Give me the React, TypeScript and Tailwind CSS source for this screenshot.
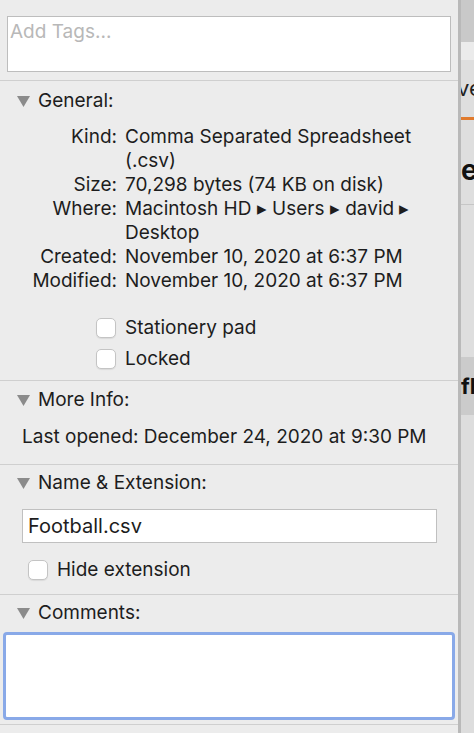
import React from "react";

const font = { fontFamily: "Inter, 'Noto Sans', sans-serif" };

function Tri() {
  return (
    <svg width="13" height="11" viewBox="0 0 13 11" className="shrink-0">
      <path d="M0 0 L13 0 L6.5 11 Z" fill="#8b8b8b" />
    </svg>
  );
}

function Header({ label }: { label: string }) {
  return (
    <div className="flex items-center gap-[8px] pl-[17px] h-[24px]">
      <Tri />
      <span className="text-[19px] text-[#1d1d1d]">{label}</span>
    </div>
  );
}

function Box() {
  return (
    <span className="w-[20px] h-[20px] rounded-[5px] border border-[#c4c4c4] bg-white shadow-[0_1px_1px_rgba(0,0,0,0.08)] shrink-0" />
  );
}

const rows: [string, string][] = [
  ["Kind:", "Comma Separated Spreadsheet"],
  ["", "(.csv)"],
  ["Size:", "70,298 bytes (74 KB on disk)"],
  ["Where:", "Macintosh HD ▸ Users ▸ david ▸"],
  ["", "Desktop"],
  ["Created:", "November 10, 2020 at 6:37 PM"],
  ["Modified:", "November 10, 2020 at 6:37 PM"],
];

export default function App() {
  return (
    <div className="flex w-[474px] h-[733px] overflow-hidden bg-[#ececec]" style={font}>
      {/* inspector panel */}
      <div className="w-[458px] shrink-0 flex flex-col bg-[#ececec] text-[#1d1d1d]">
        <div className="pt-[16px] px-[7px] pb-[8px]">
          <div className="h-[56px] border border-[#bdbdbd] bg-white px-[2px] pt-[2px] text-[19px] text-[#b8b8b8] leading-[26px]">
            Add Tags...
          </div>
        </div>
        <div className="border-t border-[#cfcfcf]" />

        {/* General */}
        <div className="pt-[8px] pb-[11px]">
          <Header label="General:" />
          <div className="mt-[12px] flex flex-col">
            {rows.map(([k, v], i) => (
              <div key={i} className="flex h-[24px] items-center text-[19px]">
                <span className="w-[117px] text-right">{k}</span>
                <span className="ml-[8px] whitespace-nowrap">{v}</span>
              </div>
            ))}
          </div>
          <div className="mt-[25px] pl-[96px] flex flex-col gap-[11px]">
            <div className="flex items-center gap-[9px] h-[20px]">
              <Box />
              <span className="text-[19px]">Stationery pad</span>
            </div>
            <div className="flex items-center gap-[9px] h-[20px]">
              <Box />
              <span className="text-[19px]">Locked</span>
            </div>
          </div>
        </div>
        <div className="border-t border-[#cfcfcf]" />

        {/* More Info */}
        <div className="pt-[7px] pb-[15px]">
          <Header label="More Info:" />
          <div className="mt-[13px] pl-[22px] h-[24px] flex items-center text-[19px] whitespace-nowrap">
            Last opened: December 24, 2020 at 9:30 PM
          </div>
        </div>
        <div className="border-t border-[#cfcfcf]" />

        {/* Name & Extension */}
        <div className="pt-[6px] pb-[14px]">
          <Header label="Name & Extension:" />
          <div className="mt-[14px] ml-[22px] w-[415px] h-[34px] border border-[#c0c0c0] bg-white flex items-center pl-[5px] text-[20px]">
            Football.csv
          </div>
          <div className="mt-[17px] pl-[28px] flex items-center gap-[9px] h-[20px]">
            <Box />
            <span className="text-[19px]">Hide extension</span>
          </div>
        </div>
        <div className="border-t border-[#cfcfcf]" />

        {/* Comments */}
        <div className="pt-[6px]">
          <Header label="Comments:" />
          <div className="mt-[7px] mx-[3px] h-[88px] rounded-[4px] border-[3px] border-[#89a9e8] bg-white" />
          <div className="mt-[4px] border-t border-[#cfcfcf]" />
        </div>
      </div>

      {/* window behind */}
      <div className="w-[3px] shrink-0 bg-[#b9b9b9]" />
      <div className="flex-1 flex flex-col bg-[#dedede] overflow-hidden">
        <div className="h-[42px] bg-[#c9c9c9]" />
        <div className="h-[18px] bg-[#ebebeb]" />
        <div className="h-[57px] flex items-center text-[22px] text-[#222] -ml-[4px] whitespace-nowrap">ve</div>
        <div className="h-[3px] bg-[#e07a2c]" />
        <div className="h-[84px] pt-[36px] text-[28px] leading-none font-bold text-[#111] whitespace-nowrap">e</div>
        <div className="h-[1px] bg-[#c6c6c6]" />
        <div className="h-[152px]" />
        <div className="h-[58px] bg-[#cbcbcb] flex items-center text-[22px] font-bold text-[#111] whitespace-nowrap">fl</div>
        <div className="flex-1 bg-[#dddddd]" />
      </div>
    </div>
  );
}
